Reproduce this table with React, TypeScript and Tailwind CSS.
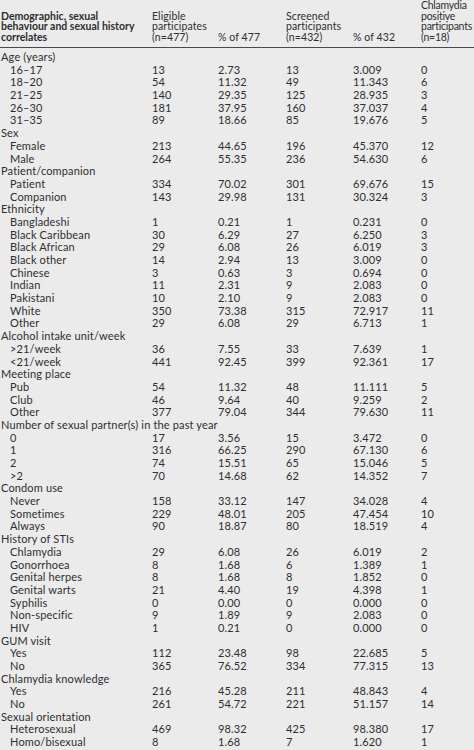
type Row = { label: string; sub?: boolean; vals?: string[] };

const cat = (label: string): Row => ({ label });
const r = (label: string, ...vals: string[]): Row => ({ label, sub: true, vals });

const rows: Row[] = [
  cat('Age (years)'),
  r('16–17', '13', '2.73', '13', '3.009', '0'),
  r('18–20', '54', '11.32', '49', '11.343', '6'),
  r('21–25', '140', '29.35', '125', '28.935', '3'),
  r('26–30', '181', '37.95', '160', '37.037', '4'),
  r('31–35', '89', '18.66', '85', '19.676', '5'),
  cat('Sex'),
  r('Female', '213', '44.65', '196', '45.370', '12'),
  r('Male', '264', '55.35', '236', '54.630', '6'),
  cat('Patient/companion'),
  r('Patient', '334', '70.02', '301', '69.676', '15'),
  r('Companion', '143', '29.98', '131', '30.324', '3'),
  cat('Ethnicity'),
  r('Bangladeshi', '1', '0.21', '1', '0.231', '0'),
  r('Black Caribbean', '30', '6.29', '27', '6.250', '3'),
  r('Black African', '29', '6.08', '26', '6.019', '3'),
  r('Black other', '14', '2.94', '13', '3.009', '0'),
  r('Chinese', '3', '0.63', '3', '0.694', '0'),
  r('Indian', '11', '2.31', '9', '2.083', '0'),
  r('Pakistani', '10', '2.10', '9', '2.083', '0'),
  r('White', '350', '73.38', '315', '72.917', '11'),
  r('Other', '29', '6.08', '29', '6.713', '1'),
  cat('Alcohol intake unit/week'),
  r('>21/week', '36', '7.55', '33', '7.639', '1'),
  r('<21/week', '441', '92.45', '399', '92.361', '17'),
  cat('Meeting place'),
  r('Pub', '54', '11.32', '48', '11.111', '5'),
  r('Club', '46', '9.64', '40', '9.259', '2'),
  r('Other', '377', '79.04', '344', '79.630', '11'),
  cat('Number of sexual partner(s) in the past year'),
  r('0', '17', '3.56', '15', '3.472', '0'),
  r('1', '316', '66.25', '290', '67.130', '6'),
  r('2', '74', '15.51', '65', '15.046', '5'),
  r('>2', '70', '14.68', '62', '14.352', '7'),
  cat('Condom use'),
  r('Never', '158', '33.12', '147', '34.028', '4'),
  r('Sometimes', '229', '48.01', '205', '47.454', '10'),
  r('Always', '90', '18.87', '80', '18.519', '4'),
  cat('History of STIs'),
  r('Chlamydia', '29', '6.08', '26', '6.019', '2'),
  r('Gonorrhoea', '8', '1.68', '6', '1.389', '1'),
  r('Genital herpes', '8', '1.68', '8', '1.852', '0'),
  r('Genital warts', '21', '4.40', '19', '4.398', '1'),
  r('Syphilis', '0', '0.00', '0', '0.000', '0'),
  r('Non-specific', '9', '1.89', '9', '2.083', '0'),
  r('HIV', '1', '0.21', '0', '0.000', '0'),
  cat('GUM visit'),
  r('Yes', '112', '23.48', '98', '22.685', '5'),
  r('No', '365', '76.52', '334', '77.315', '13'),
  cat('Chlamydia knowledge'),
  r('Yes', '216', '45.28', '211', '48.843', '4'),
  r('No', '261', '54.72', '221', '51.157', '14'),
  cat('Sexual orientation'),
  r('Heterosexual', '469', '98.32', '425', '98.380', '17'),
  r('Homo/bisexual', '8', '1.68', '7', '1.620', '1'),
];

const cols = 'grid grid-cols-[152px_66px_68px_67px_68px_1fr]';

export default function App() {
  return (
    <div
      className="w-[474px] h-[750px] overflow-hidden bg-[#ebebeb] text-[#2e2e2e] text-[11px] tracking-[0.15px]"
      style={{ fontFamily: 'Lato, "Liberation Sans", sans-serif' }}
    >
      <div
        className={`${cols} items-end text-[10.5px] tracking-[0.1px] leading-[10.5px] pb-[5px] border-b-[1.5px] border-[#4a4a4a]`}
      >
        <div className="font-bold pl-[1px] tracking-normal">
          Demographic, sexual
          <br />
          behaviour and sexual history
          <br />
          correlates
        </div>
        <div>
          Eligible
          <br />
          participates
          <br />
          (n=477)
        </div>
        <div>% of 477</div>
        <div>
          Screened
          <br />
          participants
          <br />
          (n=432)
        </div>
        <div>% of 432</div>
        <div className="whitespace-nowrap tracking-[-0.25px]">
          Chlamydia
          <br />
          positive
          <br />
          participants
          <br />
          (n=18)
        </div>
      </div>
      <div className="pt-[3px]">
        {rows.map((row, i) =>
          row.vals ? (
            <div key={i} className={`${cols} leading-[12.7px] h-[12.7px]`}>
              <div className="pl-[10px]">{row.label}</div>
              {row.vals.map((v, j) => (
                <div key={j}>{v}</div>
              ))}
            </div>
          ) : (
            <div key={i} className="leading-[12.7px] h-[12.7px] pl-[1px] whitespace-nowrap">
              {row.label}
            </div>
          )
        )}
      </div>
    </div>
  );
}
